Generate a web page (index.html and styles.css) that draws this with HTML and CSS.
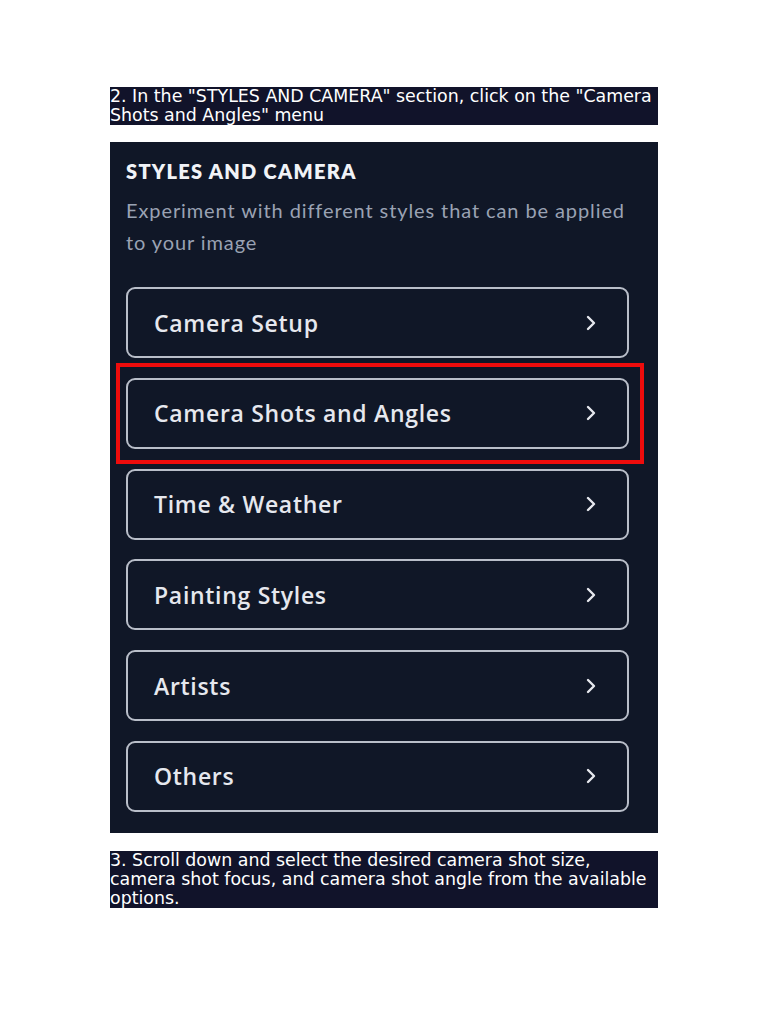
FILE: index.html
```html
<!DOCTYPE html>
<html lang="en">
<head>
    <meta charset="UTF-8">
    <meta name="viewport" content="width=device-width, initial-scale=1.0">
    <title>Styles and Camera</title>
    <link rel="stylesheet" href="styles.css">
</head>
<body>
    <div class="page">
        <p class="step">2. In the "STYLES AND CAMERA" section, click on the "Camera Shots and Angles" menu</p>

        <div class="panel">
            <h2 class="panel-title">STYLES AND CAMERA</h2>
            <p class="panel-desc">Experiment with different styles that can be applied to your image</p>

            <div class="menu">
                <div class="menu-item">
                    <span>Camera Setup</span>
                    <svg class="chevron" viewBox="0 0 12 16"><path d="M3 2l6 6-6 6"/></svg>
                </div>
                <div class="highlight">
                    <div class="menu-item">
                        <span>Camera Shots and Angles</span>
                        <svg class="chevron" viewBox="0 0 12 16"><path d="M3 2l6 6-6 6"/></svg>
                    </div>
                </div>
                <div class="menu-item">
                    <span>Time &amp; Weather</span>
                    <svg class="chevron" viewBox="0 0 12 16"><path d="M3 2l6 6-6 6"/></svg>
                </div>
                <div class="menu-item">
                    <span>Painting Styles</span>
                    <svg class="chevron" viewBox="0 0 12 16"><path d="M3 2l6 6-6 6"/></svg>
                </div>
                <div class="menu-item">
                    <span>Artists</span>
                    <svg class="chevron" viewBox="0 0 12 16"><path d="M3 2l6 6-6 6"/></svg>
                </div>
                <div class="menu-item">
                    <span>Others</span>
                    <svg class="chevron" viewBox="0 0 12 16"><path d="M3 2l6 6-6 6"/></svg>
                </div>
            </div>
        </div>

        <p class="step">3. Scroll down and select the desired camera shot size, camera shot focus, and camera shot angle from the available options.</p>
    </div>
</body>
</html>
```

FILE: styles.css
```css
body {
    margin: 0;
    background-color: white;
    font-family: "DejaVu Sans", sans-serif;
}
.page {
    width: 548px;
    margin-left: 110px;
    padding-top: 87px;
}
.step {
    margin: 0;
    background-color: #11132a;
    color: white;
    font-size: 17.4px;
    line-height: 19px;
}
.panel {
    margin: 17px 0 18px;
    background-color: #101727;
    padding: 16px 29px 21px 16px;
}
.panel-title {
    margin: 0;
    font-family: Lato, sans-serif;
    font-weight: 800;
    font-size: 20px;
    letter-spacing: 1.3px;
    color: #f1f3f7;
    line-height: 26px;
}
.panel-desc {
    margin: 10px 0 0;
    font-family: Lato, sans-serif;
    font-size: 20px;
    letter-spacing: 0.9px;
    line-height: 32px;
    color: #9aa2b3;
}
.menu {
    display: flex;
    flex-direction: column;
    gap: 19.75px;
    margin-top: 29px;
}
.menu-item {
    box-sizing: border-box;
    height: 71px;
    border: 2px solid #b9bec9;
    border-radius: 9px;
    display: flex;
    align-items: center;
    justify-content: space-between;
    padding: 0 30px 0 26px;
    font-family: "Open Sans", sans-serif;
    font-weight: 600;
    font-size: 23px;
    letter-spacing: 0.7px;
    color: #e6e8ee;
}
.highlight {
    margin: -15px -15px -15px -10px;
    padding: 11px 11px 11px 6px;
    border: 4px solid #ee0c0c;
}
.chevron {
    width: 12px;
    height: 16px;
    fill: none;
    stroke: #e6e8ee;
    stroke-width: 2.4;
    stroke-linecap: round;
    stroke-linejoin: round;
}
```
